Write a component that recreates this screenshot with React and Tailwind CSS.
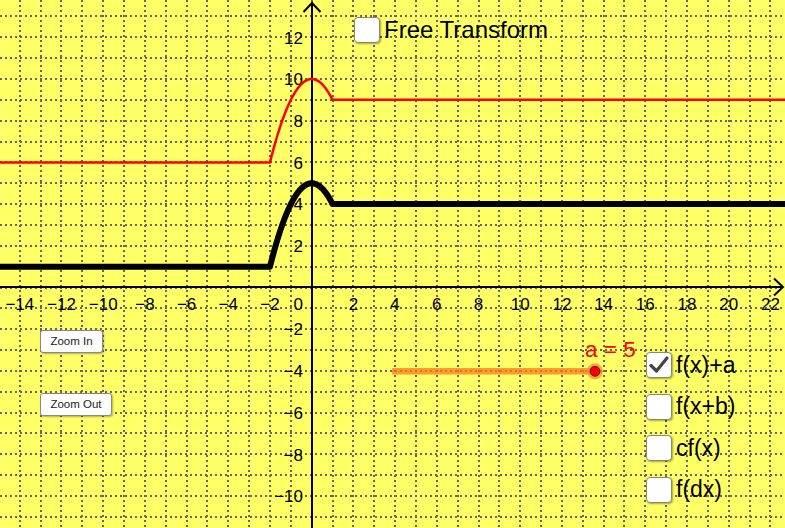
import React from 'react';

// graph geometry (pixels)
const OX = 311.7;
const OY = 287.5;
const U = 20.85;
const W = 785;
const H = 528;

const px = (x) => OX + x * U;
const py = (y) => OY - y * U;

const f = (x) => {
  if (x < -2) return 1;
  if (x <= 1) return 5 - x * x;
  return 4;
};

function curvePath(shift) {
  const pts = [];
  const add = (x) => pts.push(`${px(x).toFixed(2)},${py(f(x) + shift).toFixed(2)}`);
  add(-16);
  for (let x = -2; x <= 1.0001; x += 0.05) add(x);
  add(23);
  return 'M' + pts.join(' L');
}

const minus = (n) => (n < 0 ? '\u2212' + Math.abs(n) : String(n));

function Checkbox({ checked }) {
  return (
    <div className="w-[26px] h-[26px] bg-white border border-[#8a8a6a] rounded-[4px] shadow-[1px_1px_2px_rgba(0,0,0,0.35)] flex items-center justify-center">
      {checked && (
        <svg width="22" height="22" viewBox="0 0 22 22">
          <path d="M3 11.5 L8.5 17 L19 4" fill="none" stroke="#444" strokeWidth="3.2" strokeLinecap="round" strokeLinejoin="round" />
        </svg>
      )}
    </div>
  );
}

function Toggle({ label, checked, size = 'text-[23px]' }) {
  return (
    <div className="flex items-center gap-[4px]">
      <Checkbox checked={checked} />
      <span className={`${size} leading-none text-black`}>{label}</span>
    </div>
  );
}

function ZoomButton({ children, width }) {
  return (
    <button className={`${width} h-[23px] bg-white border border-[#888] rounded-[3px] shadow-[1px_1px_2px_rgba(0,0,0,0.3)] text-[11.5px] text-[#222] leading-none`}>
      {children}
    </button>
  );
}

export default function App() {
  const xs = [];
  for (let k = -15; k <= 23; k++) xs.push(k);
  const ys = [];
  for (let k = -12; k <= 14; k++) ys.push(k);

  const xLabels = [-14, -12, -10, -8, -6, -4, -2, 2, 4, 6, 8, 10, 12, 14, 16, 18, 20, 22];
  const yLabels = [12, 10, 8, 6, 4, 2, -2, -4, -6, -8, -10];

  return (
    <div className="relative w-[785px] h-[528px] overflow-hidden bg-[#ffff66] font-['Liberation_Sans',Arial,sans-serif]">
      <svg className="absolute inset-0" width={W} height={H} viewBox={`0 0 ${W} ${H}`}>
        {/* grid */}
        <g stroke="#666" strokeWidth="2" strokeDasharray="2 3">
          {xs.map((k) => (
            <line key={'v' + k} x1={Math.round(px(k))} y1={0} x2={Math.round(px(k))} y2={H} />
          ))}
          {ys.map((k) => (
            <line key={'h' + k} x1={0} y1={Math.round(py(k))} x2={W} y2={Math.round(py(k))} />
          ))}
        </g>

        {/* axes */}
        <g stroke="#000" strokeWidth="2" fill="none">
          <line x1={0} y1={287} x2={783} y2={287} />
          <line x1={312} y1={H} x2={312} y2={2} />
          <path d={`M${312 - 8.5} 12 L312 3 L${312 + 8.5} 12`} />
          <path d="M774 278.5 L783 287 L774 295.5" />
        </g>

        {/* labels */}
        <g fill="#000" fontSize="17" fontFamily="'Liberation Sans', Arial, sans-serif">
          {xLabels.map((k) => (
            <text key={'xl' + k} x={px(k)} y={310} textAnchor="middle">
              {minus(k)}
            </text>
          ))}
          <text x={303} y={310} textAnchor="end">0</text>
          {yLabels.map((k) => (
            <text key={'yl' + k} x={303} y={py(k) + 6.2} textAnchor="end">
              {minus(k)}
            </text>
          ))}
        </g>

        {/* curves */}
        <path d={curvePath(0)} fill="none" stroke="#000" strokeWidth="6" strokeLinejoin="round" />
        <path d={curvePath(5)} fill="none" stroke="#ff0000" strokeWidth="2.5" strokeLinejoin="round" />

        {/* slider */}
        <line x1={392} y1={371.3} x2={595} y2={371.3} stroke="#ff7a1a" strokeOpacity="0.75" strokeWidth="6.5" />
        <circle cx={595} cy={371.3} r={8} fill="#ff8c3a" fillOpacity="0.8" />
        <circle cx={595} cy={371.3} r={5} fill="#ff0000" stroke="#222" strokeWidth="0.8" />
        <text x={585} y={357} fill="#ff0000" fontSize="22.5" fontFamily="'Liberation Sans', Arial, sans-serif">
          a = 5
        </text>
      </svg>

      {/* controls on the canvas */}
      <div className="absolute left-[354px] top-[17px]">
        <Toggle label="Free Transform" size="text-[24px]" />
      </div>

      <div className="absolute left-[646px] top-[352px] flex flex-col gap-[15.5px]">
        <Toggle label="f(x)+a" checked />
        <Toggle label="f(x+b)" />
        <Toggle label="cf(x)" />
        <Toggle label="f(dx)" />
      </div>

      <div className="absolute left-[40px] top-[330px] flex flex-col items-start gap-[40px]">
        <ZoomButton width="w-[63px]">Zoom In</ZoomButton>
        <ZoomButton width="w-[72px]">Zoom Out</ZoomButton>
      </div>
    </div>
  );
}
